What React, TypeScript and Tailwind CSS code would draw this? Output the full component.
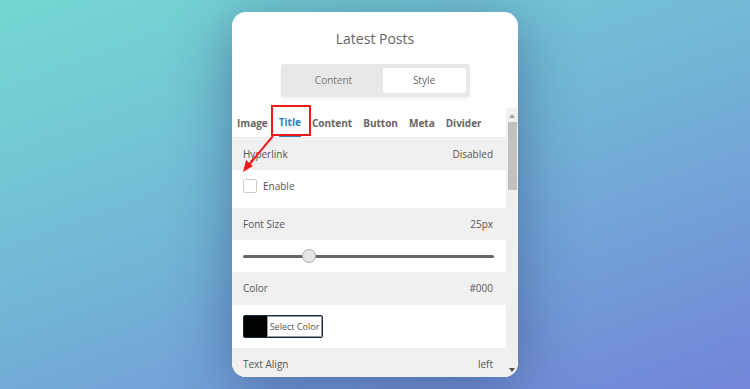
export default function App() {
  const tabs = ['Image', 'Title', 'Content', 'Button', 'Meta', 'Divider']

  return (
    <div
      className="flex h-[389px] w-[750px] justify-center overflow-hidden bg-[linear-gradient(160deg,#74d9d1_0%,#72b8d6_45%,#7385d8_100%)]"
      style={{ fontFamily: '"Open Sans", sans-serif' }}
    >
      <div className="mt-[12px] flex h-[365px] w-[286px] flex-col overflow-hidden rounded-[14px] bg-white shadow-[0_10px_60px_rgba(30,45,100,0.45)]">
        <div className="pt-[17px] text-center text-[14px] leading-[20px] text-[#666]">Latest Posts</div>

        <div className="mx-auto mt-[15px] flex h-[33px] w-[189px] items-center rounded-[3px] bg-[#e8e8e8] px-[4px] shadow-[0_2px_4px_rgba(0,0,0,0.06)]">
          <div className="w-[98px] text-center text-[10px] text-[#777]">Content</div>
          <div className="flex h-[25px] w-[83px] items-center justify-center rounded-[3px] bg-white text-[10px] text-[#666]">
            Style
          </div>
        </div>

        <div className="mt-[11px] flex min-h-0 flex-1">
          <div className="relative flex min-w-0 flex-1 flex-col">
            <div className="flex h-[30px] shrink-0 items-center gap-[11px] border-b border-[#eee] pl-[5px] pt-[2px] text-[10px] font-bold text-[#666]">
              {tabs.map((t) => (
                <div
                  key={t}
                  className={
                    t === 'Title'
                      ? 'flex h-full items-center border-b-2 border-[#2e7ec0] text-[#2e7ec0]'
                      : 'flex h-full items-center'
                  }
                >
                  {t}
                </div>
              ))}
            </div>

            <div className="flex h-[32px] shrink-0 items-center justify-between bg-[#f0f0f0] pl-[11px] pr-[13px] text-[10px] text-[#555]">
              <span>Hyperlink</span>
              <span>Disabled</span>
            </div>
            <div className="flex h-[38px] shrink-0 items-center gap-[6px] pb-[6px] pl-[11px] text-[10px] text-[#555]">
              <div className="h-[14px] w-[14px] rounded-[2px] border border-[#ccc] bg-white" />
              <span>Enable</span>
            </div>

            <div className="flex h-[32px] shrink-0 items-center justify-between bg-[#f0f0f0] pl-[11px] pr-[13px] text-[10px] text-[#555]">
              <span>Font Size</span>
              <span>25px</span>
            </div>
            <div className="flex h-[32px] shrink-0 items-center pl-[11px] pr-[12px]">
              <div className="relative h-[3px] flex-1 rounded-full bg-[#666]">
                <div className="absolute left-[59px] top-[-6px] h-[14px] w-[14px] rounded-full border border-[#aaa] bg-[#e6e6e6]" />
              </div>
            </div>

            <div className="flex h-[33px] shrink-0 items-center justify-between bg-[#f0f0f0] pl-[11px] pr-[13px] text-[10px] text-[#555]">
              <span>Color</span>
              <span>#000</span>
            </div>
            <div className="flex h-[43px] shrink-0 items-center pl-[11px]">
              <div className="flex h-[23px] w-[80px] overflow-hidden rounded-[2px] border border-[#1b2b44] bg-black">
                <div className="w-[23px] bg-black" />
                <div className="flex flex-1 items-center justify-center border border-[#999] bg-white text-[9px] text-[#555]">
                  Select Color
                </div>
              </div>
            </div>

            <div className="flex h-[32px] shrink-0 items-center justify-between bg-[#f0f0f0] pl-[11px] pr-[13px] text-[10px] text-[#555]">
              <span>Text Align</span>
              <span>left</span>
            </div>

            {/* annotation */}
            <div className="absolute left-[39px] top-[-3px] h-[31px] w-[40px] border-2 border-[#ee1c1c]" />
            <svg className="absolute left-0 top-0" width="274" height="80" viewBox="0 0 274 80">
              <line x1="41" y1="28" x2="16" y2="58" stroke="#ee1c1c" strokeWidth="2" />
              <polygon points="11,64 14,52 21,58" fill="#ee1c1c" />
            </svg>
          </div>

          <div className="flex w-[12px] flex-col items-center bg-[#f0f0f0]">
            <svg width="8" height="10" viewBox="0 0 8 10" className="mt-[3px]">
              <polygon points="1,7 7,7 4,3" fill="#a3a3a3" />
            </svg>
            <div className="mt-[1px] h-[68px] w-[9px] bg-[#c1c1c1]" />
            <div className="flex-1" />
            <svg width="8" height="10" viewBox="0 0 8 10" className="mb-[2px]">
              <polygon points="1,3 7,3 4,7" fill="#505050" />
            </svg>
          </div>
        </div>
      </div>
    </div>
  )
}
